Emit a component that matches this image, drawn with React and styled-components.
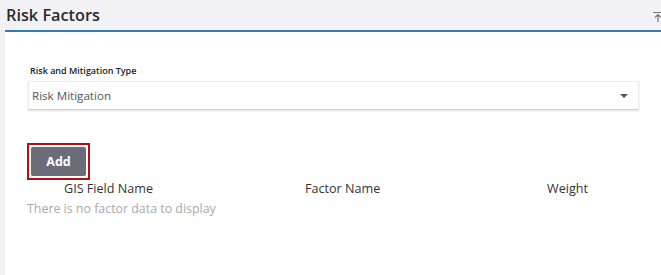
import styled, { createGlobalStyle } from "styled-components";

const GlobalStyle = createGlobalStyle`
  html, body {
    margin: 0;
    padding: 0;
    background: #f2f2f6;
    font-family: "Open Sans", "Noto Sans", sans-serif;
  }
`;

const Page = styled.div`
  width: 661px;
  height: 275px;
  overflow: hidden;
  display: flex;
  flex-direction: column;
  padding-left: 5px;
  box-sizing: border-box;
`;

const Header = styled.div`
  display: flex;
  align-items: center;
  justify-content: space-between;
  height: 30px;
  border-bottom: 2px solid #2e7bbd;
  padding-left: 1px;
`;

const Title = styled.h2`
  margin: 0;
  font-size: 16.3px;
  font-weight: 600;
  color: #2b2b2b;
`;

const CollapseIcon = styled.svg`
  margin-right: -3px;
  margin-top: 4px;
  color: #777;
`;

const Panel = styled.div`
  flex: 1;
  background: #fff;
  padding: 32px 22px 0 22px;
  display: flex;
  flex-direction: column;
`;

const Label = styled.label`
  font-size: 9px;
  font-weight: 600;
  color: #222;
  margin-left: 3px;
  margin-bottom: 4px;
`;

const Select = styled.div`
  height: 29px;
  width: 611px;
  margin-left: 1px;
  display: flex;
  align-items: center;
  justify-content: space-between;
  padding: 0 10px 0 3px;
  box-sizing: border-box;
  border: 1px solid #ececec;
  border-bottom: 1px solid #cfcfcf;
  box-shadow: 0 1px 2px rgba(0, 0, 0, 0.12);
  font-size: 11.6px;
  color: #555;
`;

const Caret = styled.span`
  width: 0;
  height: 0;
  border-left: 4px solid transparent;
  border-right: 4px solid transparent;
  border-top: 4px solid #555;
`;

const AddFrame = styled.div`
  align-self: flex-start;
  margin-top: 33px;
  border: 2px solid #b30f16;
  padding: 2px;
`;

const AddButton = styled.button`
  width: 55px;
  height: 29px;
  background: #6a6d78;
  color: #fff;
  font-family: inherit;
  font-size: 12.5px;
  font-weight: 700;
  border: none;
  border-radius: 2px;
`;

const Columns = styled.div`
  display: grid;
  grid-template-columns: 241px 242px 1fr;
  padding-left: 37px;
  margin-top: 0;
  font-size: 12.6px;
  line-height: 17px;
  color: #333;
`;

const Empty = styled.div`
  margin-left: 0;
  margin-top: 3px;
  font-size: 12.4px;
  line-height: 17px;
  color: #a9a9a9;
`;

export default function App() {
  return (
    <>
      <GlobalStyle />
      <Page>
        <Header>
          <Title>Risk Factors</Title>
          <CollapseIcon width="12" height="12" viewBox="0 0 12 12" fill="none" stroke="currentColor" strokeWidth="1.2">
            <path d="M1 1.5h10M6 11V4M3 6.5L6 3.5L9 6.5" />
          </CollapseIcon>
        </Header>
        <Panel>
          <Label>Risk and Mitigation Type</Label>
          <Select>
            <span>Risk Mitigation</span>
            <Caret />
          </Select>
          <AddFrame>
            <AddButton>Add</AddButton>
          </AddFrame>
          <Columns>
            <span>GIS Field Name</span>
            <span>Factor Name</span>
            <span>Weight</span>
          </Columns>
          <Empty>There is no factor data to display</Empty>
        </Panel>
      </Page>
    </>
  );
}
